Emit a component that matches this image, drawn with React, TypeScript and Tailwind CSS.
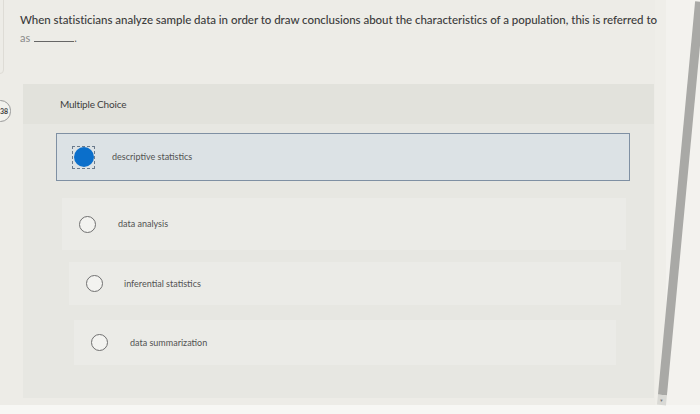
import React from "react";

type Choice = { label: string; selected?: boolean; indent: string; height: string; gap: string; circleX: string; textGap: string };

const choices: Choice[] = [
  { label: "descriptive statistics", selected: true, indent: "ml-[33px] mr-[24px]", height: "h-[48px]", gap: "mt-[9px]", circleX: "pl-[15px]", textGap: "ml-[17px]" },
  { label: "data analysis", indent: "ml-[39px] mr-[28px]", height: "h-[52px]", gap: "mt-[17px]", circleX: "pl-[17px]", textGap: "ml-[22px]" },
  { label: "inferential statistics", indent: "ml-[46px] mr-[33px]", height: "h-[43px]", gap: "mt-[12px]", circleX: "pl-[17px]", textGap: "ml-[21px]" },
  { label: "data summarization", indent: "ml-[51px] mr-[38px]", height: "h-[45px]", gap: "mt-[15px]", circleX: "pl-[17px]", textGap: "ml-[22px]" },
];

function Radio({ selected }: { selected?: boolean }) {
  if (selected) {
    return (
      <div className="w-[23px] h-[23px] flex items-center justify-center border border-dashed border-[#6a7a8c]">
        <div className="w-[20px] h-[20px] rounded-full bg-[#0b6fcb]" />
      </div>
    );
  }
  return <div className="w-[17px] h-[17px] rounded-full border-[1.5px] border-[#707070] bg-[#f3f3f0]" />;
}

export default function App() {
  return (
    <div className="w-[700px] h-[414px] bg-[#edece7] flex flex-col overflow-hidden relative font-['Lato',sans-serif]">
      {/* question number badge, cut off by the left edge */}
      <div className="absolute left-[-10px] top-[100px] w-[21px] h-[22px] rounded-full border border-[#9a9a9a] bg-[#f2f2ee] flex items-center justify-end pr-[2px]">
        <span className="text-[7px] font-bold text-[#444]">38</span>
      </div>
      <div className="absolute left-[-6px] top-[-6px] w-[10px] h-[80px] rounded-[4px] border border-[#dedcd6]" />

      <div className="flex flex-1">
        <div className="w-[655px] pl-[20px] pt-[11px]">
          <p className="relative z-10 text-[11.5px] leading-[18px] font-medium text-[#3b3b3b] whitespace-nowrap tracking-[-0.03px]">
            When statisticians analyze sample data in order to draw conclusions about the characteristics of a population, this is referred to
          </p>
          <p className="text-[11px] leading-[18px] text-[#8a8a8a] flex items-end">
            as<span className="inline-block w-[40px] ml-[4px] mb-[5px] border-b border-[#666]" />
            <span className="text-[#666]">.</span>
          </p>

          <div className="mt-[37px] ml-[3px] mr-[1px] h-[314px] bg-[#e7e7e2]">
            <div className="h-[40px] bg-[#e2e2dc] flex items-center pl-[37px]">
              <span className="text-[10px] text-[#3e3e3e] tracking-[-0.2px]">Multiple Choice</span>
            </div>
            {choices.map((c) => (
              <div
                key={c.label}
                className={`${c.gap} ${c.indent} ${c.height} ${c.circleX} flex items-center ${
                  c.selected ? "bg-[#dce2e5] border border-[#7f90a3]" : "bg-[#ebebe7]"
                }`}
              >
                <Radio selected={c.selected} />
                <span className={`${c.textGap} text-[9px] text-[#525252]`}>{c.label}</span>
              </div>
            ))}
          </div>
        </div>

        {/* scrollbar */}
        <div className="flex-1 flex bg-[#efeee9]">
          <div className="ml-[2px] w-[9px] h-[405px] flex flex-col justify-end rotate-[5.4deg] origin-bottom">
            <div className="flex-1 bg-[#a9a9a6]" />
            <div className="h-[10px] bg-[#d9d9d5] flex items-center justify-center">
              <span className="text-[5px] text-[#777] leading-none">▾</span>
            </div>
          </div>
          <div className="flex-1 bg-[#f3f2ee]" />
        </div>
      </div>
      <div className="h-[9px] bg-[#f7f7f4]" />
    </div>
  );
}
